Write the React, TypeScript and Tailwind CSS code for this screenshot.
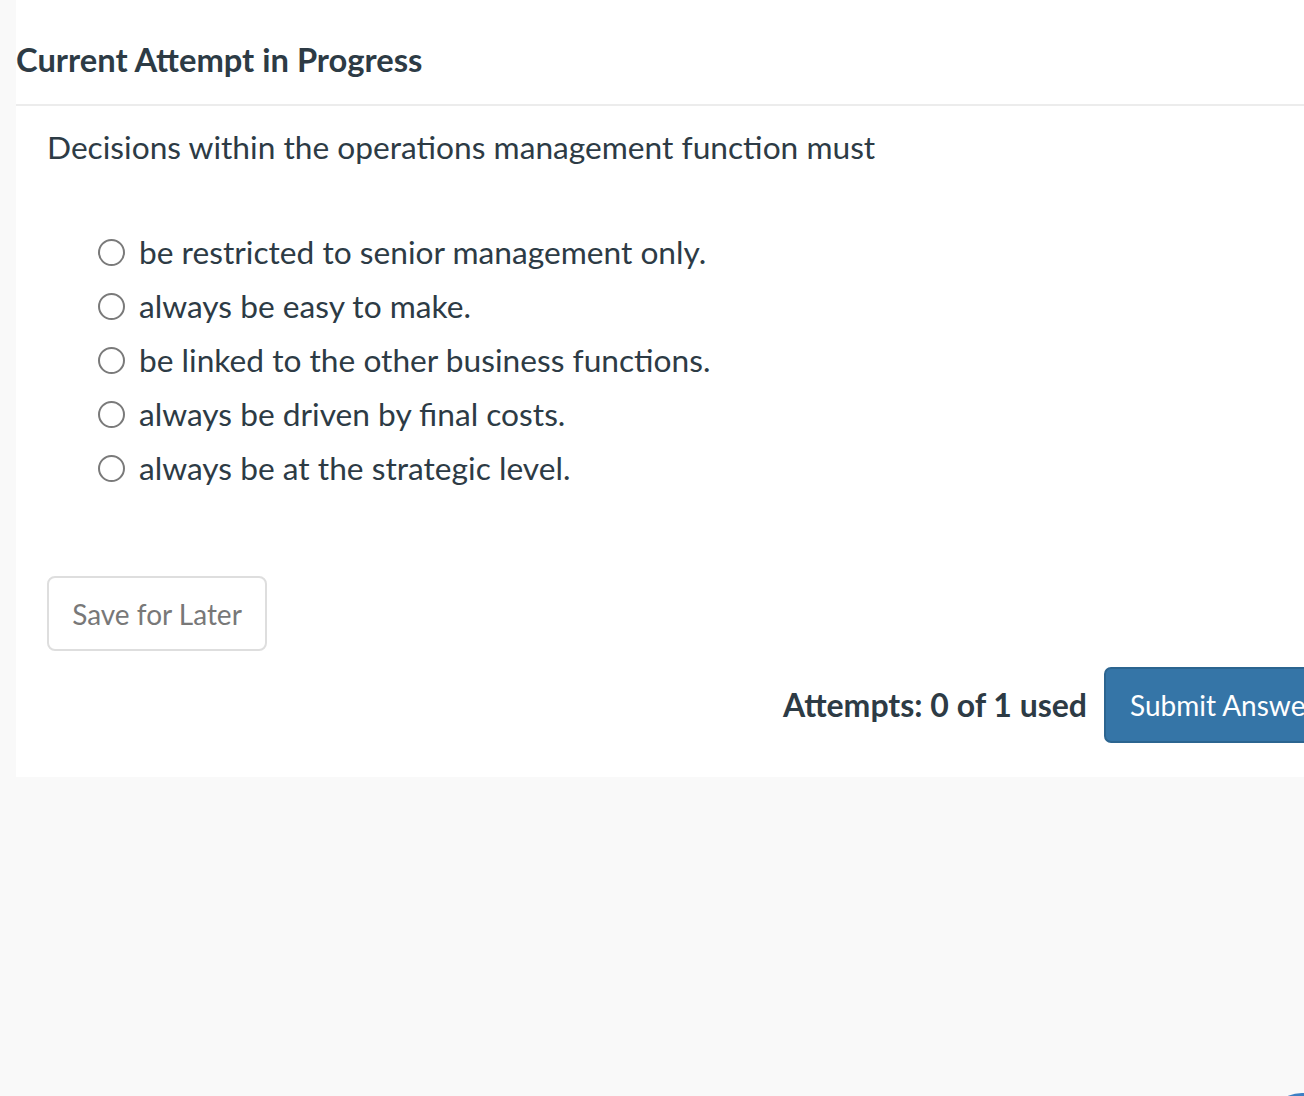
const options = [
  "be restricted to senior management only.",
  "always be easy to make.",
  "be linked to the other business functions.",
  "always be driven by final costs.",
  "always be at the strategic level.",
];

function Radio() {
  return (
    <span className="inline-block w-[27px] h-[27px] rounded-full border-2 border-[#7a7a7a] bg-white shrink-0" />
  );
}

export default function App() {
  return (
    <div
      className="relative h-[1096px] w-[1304px] overflow-hidden bg-[#f9f9f9] pl-4 text-[#2d3b45]"
      style={{ fontFamily: "Lato, 'Open Sans', sans-serif" }}
    >
      <div className="w-[1400px] bg-white">
        {/* Header */}
        <div className="h-[106px] border-b-2 border-[#ececec] pt-[38px]">
          <h1 className="text-[32.7px] font-bold leading-[44px]">
            Current Attempt in Progress
          </h1>
        </div>

        {/* Question */}
        <div className="pl-[31px] pt-[19px]">
          <p className="text-[31.7px] leading-[44px]">
            Decisions within the operations management function must
          </p>

          <ul className="mt-[56px] pl-[51px] flex flex-col">
            {options.map((o) => (
              <li key={o} className="flex items-center gap-[14px] h-[54px]">
                <Radio />
                <span className="text-[31.7px] leading-[54px]">{o}</span>
              </li>
            ))}
          </ul>

          <div className="mt-[81px]">
            <button className="w-[220px] h-[75px] rounded-[8px] border-2 border-[#dedede] bg-white text-[28px] text-[#787878]">
              Save for Later
            </button>
          </div>

          <div className="flex items-center justify-end mt-[16px] pr-[92px] pb-[34px]">
            <span className="text-[32px] font-bold mr-[17px]">
              Attempts: 0 of 1 used
            </span>
            <button className="h-[76px] w-[220px] rounded-l-[7px] border-2 border-[#2c6590] bg-[#3575a7] pl-[24px] text-left text-[28px] text-white">
              Submit Answer
            </button>
          </div>
        </div>
      </div>

      <div className="absolute left-[1266px] top-[1093px] h-[72px] w-[72px] rounded-full bg-[#3d7fc4]" />
    </div>
  );
}
